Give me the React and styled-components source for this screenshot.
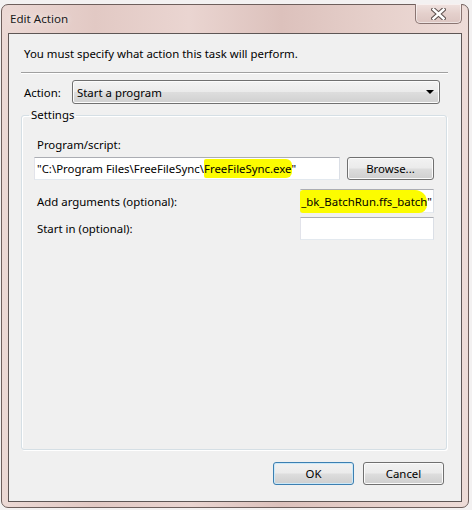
import * as React from "react";
import styled, { createGlobalStyle } from "styled-components";

const GlobalStyle = createGlobalStyle`
  html, body {
    margin: 0;
    padding: 0;
    background: #f3f1f1;
  }
  body {
    font-family: "Noto Sans", "Open Sans", sans-serif;
    font-size: 11.4px;
    color: #000;
  }
`;

const Window = styled.div`
  box-sizing: border-box;
  margin: 4px 0 0 1px;
  width: 468px;
  height: 504px;
  border: 1px solid #6e5f5c;
  border-radius: 7px;
  background: linear-gradient(
    90deg,
    #ecd9d5 0%,
    #e2c9c4 20%,
    #ead5d1 40%,
    #dcc1bc 60%,
    #e6d0cb 80%,
    #eedcd8 100%
  );
  padding: 0 6px 5px 6px;
  display: flex;
  flex-direction: column;
`;

const TitleBar = styled.div`
  height: 28px;
  display: flex;
  align-items: flex-start;
  justify-content: space-between;
`;

const Title = styled.div`
  padding: 6px 0 0 2px;
  font-size: 11.6px;
  color: #1a1a1a;
  text-shadow: 0 0 6px rgba(255, 255, 255, 0.9);
`;

const CloseButton = styled.div`
  box-sizing: border-box;
  width: 47px;
  height: 20px;
  margin-top: -1px;
  border: 1px solid #8a7572;
  border-top: none;
  border-radius: 0 0 5px 5px;
  background: linear-gradient(#f0e2df, #e4d0cc 50%, #dcc5c1);
  box-shadow: inset 0 0 0 1px rgba(255, 255, 255, 0.5);
  display: flex;
  align-items: center;
  justify-content: center;
`;

const Client = styled.div`
  flex: 1;
  border: 1px solid #5e5655;
  background: #f0f0f0;
  display: flex;
  flex-direction: column;
  padding: 0 13px 16px 12px;
`;

const Instruction = styled.div`
  padding: 12px 0 0 3px;
  height: 26px;
`;

const Separator = styled.div`
  height: 1px;
  background: #a0a0a0;
  border-bottom: 1px solid #ffffff;
`;

const ActionRow = styled.div`
  display: flex;
  align-items: center;
  margin-top: 6px;
`;

const Label = styled.div`
  box-sizing: border-box;
  padding-left: ${(p) => p.indent || 0}px;
  width: ${(p) => (p.width ? p.width + "px" : "auto")};
  flex: ${(p) => (p.grow ? 1 : "none")};
`;

const Select = styled.div`
  box-sizing: border-box;
  width: 368px;
  height: 24px;
  border: 1px solid #707070;
  border-radius: 3px;
  background: linear-gradient(#f3f3f3 0%, #ebebeb 48%, #dddddd 52%, #d0d0d0 100%);
  box-shadow: inset 0 0 0 1px #fcfcfc;
  display: flex;
  align-items: center;
  justify-content: space-between;
  padding: 0 5px 0 4px;
`;

const Arrow = styled.div`
  width: 0;
  height: 0;
  border-left: 4px solid transparent;
  border-right: 4px solid transparent;
  border-top: 4px solid #000;
`;

const Group = styled.fieldset`
  flex: 1;
  margin: 4px 1px 0 0;
  padding: 4px 12px 0 12px;
  border: 1px solid #d5dfe5;
  border-radius: 3px;
  box-shadow: inset 1px 1px 0 #ffffff, 1px 1px 0 #ffffff;
  min-width: 0;
`;

const Legend = styled.legend`
  padding: 0 2px;
  margin-left: -5px;
  line-height: 14px;
`;

const FieldLabel = styled.div`
  padding-left: 3px;
  margin-top: 11px;
  height: 18px;
`;

const Row = styled.div`
  display: flex;
  align-items: center;
  justify-content: space-between;
  margin-top: ${(p) => p.top || 0}px;
`;

const TextBox = styled.div`
  box-sizing: border-box;
  width: ${(p) => p.width}px;
  height: ${(p) => p.height || 23}px;
  background: #ffffff;
  border: 1px solid #e3e9ef;
  border-top-color: #abadb3;
  border-left-color: #e2e3ea;
  border-right-color: #dbdfe6;
  display: flex;
  align-items: center;
  justify-content: ${(p) => (p.right ? "flex-end" : "flex-start")};
  padding: 0 ${(p) => (p.right ? 1 : 2)}px 0 2px;
  white-space: nowrap;
  overflow: visible;
`;

const Mark = styled.span`
  background: #fcfc00;
  border-radius: ${(p) => (p.big ? "3px 12px 8px 3px" : "2px 6px 6px 2px")};
  padding: ${(p) => (p.big ? "4px 0 4px 1px" : "2px 0")};
`;

const Button = styled.div`
  box-sizing: border-box;
  width: ${(p) => p.width || 81}px;
  height: 23px;
  border: 1px solid ${(p) => (p.primary ? "#3c7fb1" : "#707070")};
  border-radius: 3px;
  background: linear-gradient(#f2f2f2 0%, #ebebeb 48%, #dddddd 52%, #cfcfcf 100%);
  box-shadow: inset 0 0 0 1px ${(p) => (p.primary ? "#cbe8f8" : "#fbfbfb")};
  display: flex;
  align-items: center;
  justify-content: center;
`;

const Footer = styled.div`
  display: flex;
  justify-content: flex-end;
  gap: 9px;
  margin-top: 12px;
  padding-right: 4px;
`;

const CloseIcon = () => (
  <svg width="15" height="12" viewBox="0 0 15 12">
    <path
      d="M2.5 1.5 L12.5 10.5 M12.5 1.5 L2.5 10.5"
      stroke="#5a4d4b"
      strokeWidth="4.5"
      strokeLinecap="square"
    />
    <path
      d="M2.5 1.5 L12.5 10.5 M12.5 1.5 L2.5 10.5"
      stroke="#ffffff"
      strokeWidth="2.5"
      strokeLinecap="square"
    />
  </svg>
);

export default function App() {
  return (
    <>
      <GlobalStyle />
      <Window>
        <TitleBar>
          <Title>Edit Action</Title>
          <CloseButton>
            <CloseIcon />
          </CloseButton>
        </TitleBar>
        <Client>
          <Instruction>You must specify what action this task will perform.</Instruction>
          <Separator />
          <ActionRow>
            <Label indent={3} width={51}>
              Action:
            </Label>
            <Select>
              Start a program
              <Arrow />
            </Select>
          </ActionRow>
          <Group>
            <Legend>Settings</Legend>
            <FieldLabel>Program/script:</FieldLabel>
            <Row top={2}>
              <TextBox width={306}>
                "C:\Program Files\FreeFileSync\<Mark>FreeFileSync.exe</Mark>"
              </TextBox>
              <Button width={87}>Browse...</Button>
            </Row>
            <Row top={9}>
              <Label indent={3} grow>
                Add arguments (optional):
              </Label>
              <TextBox width={134} height={24} right>
                <Mark big>_bk_BatchRun.ffs_batch</Mark>"
              </TextBox>
            </Row>
            <Row top={4}>
              <Label indent={3} grow>
                Start in (optional):
              </Label>
              <TextBox width={134} />
            </Row>
          </Group>
          <Footer>
            <Button primary>OK</Button>
            <Button>Cancel</Button>
          </Footer>
        </Client>
      </Window>
    </>
  );
}
